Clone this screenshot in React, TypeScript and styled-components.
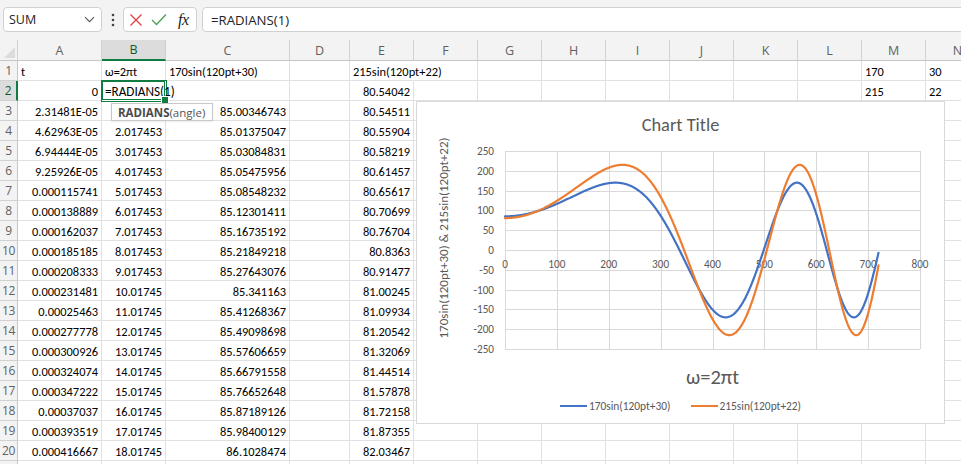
import React, { useMemo } from 'react';
import styled, { createGlobalStyle } from 'styled-components';

const CELL_FONT = `Calibri, Carlito, "Open Sans", "Noto Sans", sans-serif`;
const UI_FONT = `"Segoe UI", "Open Sans", "Noto Sans", sans-serif`;
const GREEN = '#107c41';
const GRID_LINE = '#e1e1e1';
const HEAD_LINE = '#d1d1d1';
const HEAD_BG = '#f3f3f3';
const CHART_TEXT = '#595959';

const GlobalStyle = createGlobalStyle`
  html, body { margin: 0; padding: 0; background: #fff; overflow: hidden; }
  * { box-sizing: border-box; }
`;

const Window = styled.div`
  width: 961px;
  height: 464px;
  overflow: hidden;
  background: #fff;
  display: flex;
  flex-direction: column;
`;

/* ---------- formula bar ---------- */
const FormulaBar = styled.div`
  height: 40px;
  flex-shrink: 0;
  display: flex;
  align-items: center;
  padding: 0 0 1px 3px;
  background: ${HEAD_BG};
  font-family: ${UI_FONT};
`;

const NameBox = styled.div`
  width: 99px;
  height: 25px;
  display: flex;
  align-items: center;
  justify-content: space-between;
  padding: 0 6px 0 5px;
  background: #fff;
  border: 1px solid ${HEAD_LINE};
  border-radius: 4px;
  font-size: 12.5px;
  color: #222;
`;

const MoreButton = styled.div`
  width: 21px;
  height: 25px;
  display: flex;
  align-items: center;
  justify-content: center;
`;

const ActionGroup = styled.div`
  width: 74px;
  height: 25px;
  display: flex;
  align-items: center;
  background: #fff;
  border: 1px solid ${HEAD_LINE};
  border-radius: 4px;
  margin-right: 5px;
`;

const ActionSlot = styled.div<{ $w?: number }>`
  width: ${({ $w }) => $w || 24}px;
  height: 100%;
  display: flex;
  align-items: center;
  justify-content: center;
`;

const FxLabel = styled.span`
  font-family: "Liberation Serif", "DejaVu Serif", serif;
  font-style: italic;
  font-size: 16px;
  color: #222;
  letter-spacing: -0.5px;
`;

const FormulaInput = styled.div`
  flex: 1;
  height: 25px;
  margin-right: -6px;
  display: flex;
  align-items: center;
  padding-left: 8px;
  background: #fff;
  border: 1px solid ${HEAD_LINE};
  border-radius: 4px;
  font-size: 13.2px;
  color: #222;
`;

/* ---------- sheet ---------- */
const Sheet = styled.div`
  position: relative;
  flex: 1;
  overflow: hidden;
`;

const Grid = styled.div<{ $cols: string }>`
  display: grid;
  grid-template-columns: ${({ $cols }) => $cols};
  grid-template-rows: 21px repeat(21, 20px);
  font-family: ${CELL_FONT};
  font-size: 12.4px;
  color: #000;
`;

const Corner = styled.div`
  position: relative;
  background: ${HEAD_BG};
  border-right: 1px solid ${HEAD_LINE};
  border-bottom: 1px solid #c6c6c6;
  &::after {
    content: '';
    position: absolute;
    right: 2px;
    bottom: 2px;
    border-left: 11px solid transparent;
    border-bottom: 11px solid #dcdcdc;
  }
`;

const ColHeader = styled.div<{ $selected?: boolean }>`
  display: flex;
  align-items: center;
  justify-content: center;
  background: ${({ $selected }) => ($selected ? '#dcdcdc' : HEAD_BG)};
  border-right: 1px solid ${HEAD_LINE};
  border-bottom: ${({ $selected }) => ($selected ? `2px solid ${GREEN}` : '1px solid #c6c6c6')};
  font-family: ${UI_FONT};
  font-size: 12.5px;
  color: ${({ $selected }) => ($selected ? '#0e5c2f' : '#616161')};
`;

const RowHeader = styled.div<{ $selected?: boolean }>`
  display: flex;
  align-items: center;
  justify-content: center;
  background: ${({ $selected }) => ($selected ? '#dcdcdc' : HEAD_BG)};
  border-right: ${({ $selected }) => ($selected ? `2px solid ${GREEN}` : '1px solid #c6c6c6')};
  border-bottom: 1px solid ${HEAD_LINE};
  font-family: ${UI_FONT};
  font-size: 12px;
  color: ${({ $selected }) => ($selected ? '#0e5c2f' : '#616161')};
  letter-spacing: -0.3px;
`;

const Cell = styled.div<{ $align?: 'left' | 'right'; $spill?: boolean }>`
  display: flex;
  align-items: center;
  justify-content: ${({ $align }) => ($align === 'right' ? 'flex-end' : 'flex-start')};
  padding: 1px 3px 0 3px;
  white-space: nowrap;
  overflow: visible;
  border-right: 1px solid ${({ $spill }) => ($spill ? 'transparent' : GRID_LINE)};
  border-bottom: 1px solid ${GRID_LINE};
`;

const ActiveCell = styled(Cell)`
  position: relative;
  z-index: 2;
  padding-left: 3px;
  font-size: 13.2px;
  border-color: transparent;
  box-shadow: 0 0 0 1px ${GREEN}, inset 0 0 0 1px ${GREEN};
  &::after {
    content: '';
    position: absolute;
    right: -4px;
    bottom: -4px;
    width: 6px;
    height: 6px;
    background: ${GREEN};
    border: 1px solid #fff;
  }
`;

const Caret = styled.span`
  display: inline-block;
  width: 1px;
  height: 15px;
  background: #000;
  margin: 0 0 1px;
`;

const FnTooltip = styled.div`
  position: absolute;
  left: 111px;
  top: 63px;
  width: 102px;
  height: 18px;
  z-index: 3;
  display: flex;
  align-items: center;
  padding-left: 6px;
  background: #fff;
  border: 1px solid #c8c8c8;
  box-shadow: 0 1px 2px rgba(0, 0, 0, 0.08);
  font-family: ${UI_FONT};
  font-size: 11.5px;
  color: #555;
  white-space: nowrap;
`;

const FnName = styled.b`
  font-weight: 700;
  color: #4a4a4a;
`;

/* ---------- chart ---------- */
const ChartPanel = styled.div`
  position: absolute;
  left: 416px;
  top: 61px;
  width: 529px;
  height: 323px;
  z-index: 4;
  background: #fff;
  border: 1px solid #d9d9d9;
  display: grid;
  grid-template-columns: 54px 1fr;
  grid-template-rows: 44px 210px 42px 16px;
  font-family: ${CELL_FONT};
  color: ${CHART_TEXT};
`;

const ChartTitle = styled.div`
  grid-column: 1 / -1;
  grid-row: 1;
  display: flex;
  align-items: center;
  justify-content: center;
  font-size: 18.4px;
`;

const AxisTitleY = styled.div`
  grid-column: 1;
  grid-row: 1 / 3;
  display: flex;
  align-items: flex-start;
  justify-content: center;
  padding-top: 127px;
`;

const AxisTitleYText = styled.span`
  flex-shrink: 0;
  display: block;
  height: 18px;
  line-height: 18px;
  transform: rotate(-90deg);
  white-space: nowrap;
  font-size: 13px;
`;

const PlotSvg = styled.svg`
  grid-column: 2;
  grid-row: 2;
  overflow: visible;
  font-family: ${CELL_FONT};
`;

const AxisTitleX = styled.div`
  grid-column: 2;
  grid-row: 3;
  display: flex;
  align-items: center;
  justify-content: center;
  padding-left: 10px;
  font-size: 20.5px;
`;

const Legend = styled.div`
  grid-column: 1 / -1;
  grid-row: 4;
  display: flex;
  align-items: center;
  justify-content: center;
  gap: 20px;
  font-size: 11.4px;
`;

const LegendItem = styled.div`
  display: flex;
  align-items: center;
  gap: 2px;
`;

const LegendSwatch = styled.span<{ $color: string }>`
  width: 27px;
  height: 2.5px;
  background: ${({ $color }) => $color};
`;

/* ---------- data ---------- */
const COLUMNS = [
  { id: 'A', w: 84 },
  { id: 'B', w: 64 },
  { id: 'C', w: 124 },
  { id: 'D', w: 60 },
  { id: 'E', w: 64 },
  ...['F', 'G', 'H', 'I', 'J', 'K', 'L', 'M', 'N'].map((id) => ({ id, w: 64 })),
];

const A_VALUES = [
  '2.31481E-05', '4.62963E-05', '6.94444E-05', '9.25926E-05', '0.000115741', '0.000138889',
  '0.000162037', '0.000185185', '0.000208333', '0.000231481', '0.00025463', '0.000277778',
  '0.000300926', '0.000324074', '0.000347222', '0.00037037', '0.000393519', '0.000416667',
];
const C_VALUES = [
  '85.00346743', '85.01375047', '85.03084831', '85.05475956', '85.08548232', '85.12301411',
  '85.16735192', '85.21849218', '85.27643076', '85.341163', '85.41268367', '85.49098698',
  '85.57606659', '85.66791558', '85.76652648', '85.87189126', '85.98400129', '86.1028474',
];
const E_VALUES = [
  '80.54511', '80.55904', '80.58219', '80.61457', '80.65617', '80.70699', '80.76704', '80.8363',
  '80.91477', '81.00245', '81.09934', '81.20542', '81.32069', '81.44514', '81.57878', '81.72158',
  '81.87355', '82.03467',
];

type CellData = { text: string; align: 'left' | 'right'; spill?: boolean };

const buildSheet = () => {
  const s: Record<string, CellData> = {
    A1: { text: 't', align: 'left' },
    B1: { text: 'ω=2πt', align: 'left' },
    C1: { text: '170sin(120pt+30)', align: 'left' },
    E1: { text: '215sin(120pt+22)', align: 'left', spill: true },
    M1: { text: '170', align: 'left' },
    N1: { text: '30', align: 'left' },
    A2: { text: '0', align: 'right' },
    E2: { text: '80.54042', align: 'right' },
    M2: { text: '215', align: 'left' },
    N2: { text: '22', align: 'left' },
  };
  for (let r = 3; r <= 20; r++) {
    const n = r - 2;
    s[`A${r}`] = { text: A_VALUES[n - 1], align: 'right' };
    // B3 sits under the function tooltip
    if (r > 3) s[`B${r}`] = { text: n < 10 ? `${n}.017453` : `${n}.01745`, align: 'right' };
    s[`C${r}`] = { text: C_VALUES[n - 1], align: 'right' };
    s[`E${r}`] = { text: E_VALUES[n - 1], align: 'right' };
  }
  return s;
};

/* ---------- chart geometry ---------- */
const PLOT = { left: 34, top: 5, width: 415, height: 198 };
const sx = (v: number) => PLOT.left + (v / 800) * PLOT.width;
const sy = (v: number) => PLOT.top + ((250 - v) / 500) * PLOT.height;

const seriesPath = (amp: number, phaseDeg: number) => {
  const pts: string[] = [];
  for (let n = 0; n <= 720; n++) {
    const x = n + Math.PI / 180;
    const t = n / 43200;
    const y = amp * Math.sin((phaseDeg * Math.PI) / 180 + t * x);
    pts.push(`${sx(x).toFixed(2)},${sy(y).toFixed(2)}`);
  }
  return 'M' + pts.join('L');
};

const Y_TICKS = [250, 200, 150, 100, 50, 0, -50, -100, -150, -200, -250];
const X_TICKS = [0, 100, 200, 300, 400, 500, 600, 700, 800];

const Chart = () => {
  const blue = useMemo(() => seriesPath(170, 30), []);
  const orange = useMemo(() => seriesPath(215, 22), []);
  return (
    <ChartPanel>
      <ChartTitle>Chart Title</ChartTitle>
      <AxisTitleY>
        <AxisTitleYText>170sin(120pt+30) &amp; 215sin(120pt+22)</AxisTitleYText>
      </AxisTitleY>
      <PlotSvg width={473} height={210} viewBox="0 0 473 210">
        {Y_TICKS.map((v) => (
          <line key={`h${v}`} x1={PLOT.left} x2={PLOT.left + PLOT.width} y1={Math.round(sy(v)) + 0.5} y2={Math.round(sy(v)) + 0.5} stroke="#d9d9d9" strokeWidth={1} />
        ))}
        {X_TICKS.map((v) => (
          <line key={`v${v}`} x1={Math.round(sx(v)) + 0.5} x2={Math.round(sx(v)) + 0.5} y1={PLOT.top} y2={PLOT.top + PLOT.height} stroke="#d9d9d9" strokeWidth={1} />
        ))}
        {Y_TICKS.map((v) => (
          <text key={`yl${v}`} x={23} y={sy(v) + 4} textAnchor="end" fontSize={11.2} fill={CHART_TEXT}>
            {v}
          </text>
        ))}
        {X_TICKS.map((v) => (
          <text key={`xl${v}`} x={sx(v)} y={sy(0) + 18} textAnchor="middle" fontSize={11.2} fill={CHART_TEXT}>
            {v}
          </text>
        ))}
        <path d={blue} fill="none" stroke="#4472c4" strokeWidth={2.2} strokeLinejoin="round" strokeLinecap="round" />
        <path d={orange} fill="none" stroke="#ed7d31" strokeWidth={2.2} strokeLinejoin="round" strokeLinecap="round" />
      </PlotSvg>
      <AxisTitleX>ω=2πt</AxisTitleX>
      <Legend>
        <LegendItem>
          <LegendSwatch $color="#4472c4" />
          170sin(120pt+30)
        </LegendItem>
        <LegendItem>
          <LegendSwatch $color="#ed7d31" />
          215sin(120pt+22)
        </LegendItem>
      </Legend>
    </ChartPanel>
  );
};

export default function App() {
  const sheet = useMemo(buildSheet, []);
  const template = `18px ${COLUMNS.map((c) => `${c.w}px`).join(' ')}`;
  const rows = Array.from({ length: 21 }, (_, i) => i + 1);

  return (
    <Window>
      <GlobalStyle />
      <FormulaBar>
        <NameBox>
          <span>SUM</span>
          <svg width="11" height="7" viewBox="0 0 11 7">
            <path d="M1 1.2 L5.5 5.7 L10 1.2" fill="none" stroke="#555" strokeWidth="1.1" />
          </svg>
        </NameBox>
        <MoreButton>
          <svg width="4" height="14" viewBox="0 0 4 14">
            <circle cx="2" cy="2" r="1.3" fill="#444" />
            <circle cx="2" cy="7" r="1.3" fill="#444" />
            <circle cx="2" cy="12" r="1.3" fill="#444" />
          </svg>
        </MoreButton>
        <ActionGroup>
          <ActionSlot>
            <svg width="14" height="14" viewBox="0 0 14 14">
              <path d="M1.5 1.5 L12.5 12.5 M12.5 1.5 L1.5 12.5" stroke="#e0434a" strokeWidth="1.4" fill="none" />
            </svg>
          </ActionSlot>
          <ActionSlot>
            <svg width="16" height="13" viewBox="0 0 16 13">
              <path d="M1 7 L5.5 11.5 L15 1.5" stroke="#4fa05a" strokeWidth="1.4" fill="none" />
            </svg>
          </ActionSlot>
          <ActionSlot $w={26}>
            <FxLabel>fx</FxLabel>
          </ActionSlot>
        </ActionGroup>
        <FormulaInput>=RADIANS(1)</FormulaInput>
      </FormulaBar>

      <Sheet>
        <Grid $cols={template}>
          <Corner />
          {COLUMNS.map((c) => (
            <ColHeader key={c.id} $selected={c.id === 'B'}>
              {c.id}
            </ColHeader>
          ))}
          {rows.map((r) => (
            <React.Fragment key={r}>
              <RowHeader $selected={r === 2}>{r <= 20 ? r : ''}</RowHeader>
              {COLUMNS.map((c) => {
                const ref = `${c.id}${r}`;
                if (ref === 'B2') {
                  return (
                    <ActiveCell key={ref} $align="left">
                      =RADIA
                      <Caret />
                      NS(1)
                    </ActiveCell>
                  );
                }
                const d = sheet[ref];
                return (
                  <Cell key={ref} $align={d?.align} $spill={d?.spill}>
                    {d?.text}
                  </Cell>
                );
              })}
            </React.Fragment>
          ))}
        </Grid>

        <FnTooltip>
          <FnName>RADIANS</FnName>(angle)
        </FnTooltip>

        <Chart />
      </Sheet>
    </Window>
  );
}
